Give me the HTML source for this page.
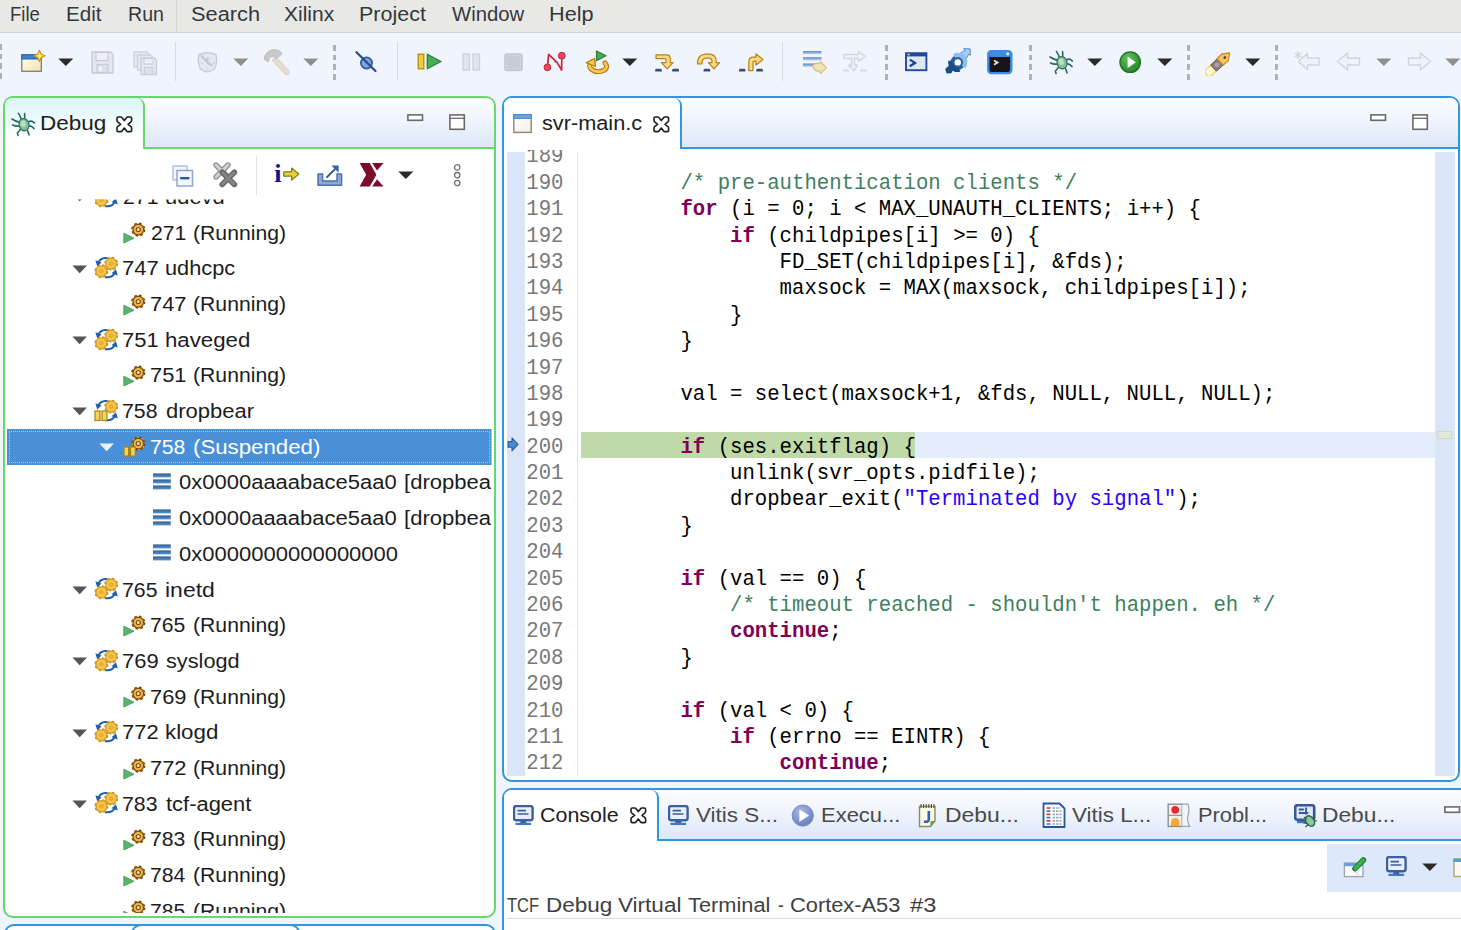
<!DOCTYPE html>
<html><head><meta charset="utf-8"><title>Vitis IDE</title>
<style>
html,body{margin:0;padding:0}
html{overflow:hidden;width:1461px;height:930px}
body{width:1461px;height:930px;position:relative;overflow:hidden;background:#f0f4fc;font-family:"Liberation Sans",sans-serif;font-size:19.6px}
div,span,svg{position:absolute;box-sizing:border-box}
.t{white-space:pre;line-height:24px;height:24px;transform-origin:0 0;display:block}
#menubar{left:0;top:0;width:1461px;height:33px;background:#e8e8e7;border-bottom:1px solid #d0d0d0}
#menusep{left:176px;top:0;width:1px;height:32px;background:#d4d4d4}
.panel{background:#fff;border:2px solid #3197db;border-radius:10px;overflow:hidden}
.hdr{left:0;top:0;right:0;height:51px;background:linear-gradient(#fdfdff 0%,#f3f6fd 35%,#dde8fa 100%);border-bottom:2px solid #3197db}
.tab{left:0;top:0;height:51px;background:#fff;border-right:2px solid #3197db;border-top-right-radius:8px}
#dbg{left:3px;top:96px;width:493px;height:822px;border-color:#69d76d}
#dbg .hdr{border-bottom-color:#69d76d}
#dbg .tab{width:140px;border-right-color:#69d76d;background:linear-gradient(#dcf6f6 0%,#eefbfb 45%,#fff 80%)}
#ed{left:502px;top:96px;width:958px;height:686px}
#ed .tab{width:178px}
#con{left:502px;top:788px;width:1000px;height:200px}
#con .tab{width:155px}
#bl{left:4px;top:924px;width:492px;height:60px}
#tree{left:5px;top:198px;width:486.5px;height:715px;overflow:hidden;clip-path:inset(1.5px 0 0 0)}
#tree .t{}
#sel{left:2px;top:232px;width:484.5px;height:35.5px;background:#4a90d9}
#sel:after{content:"";position:absolute;left:2px;top:2px;right:2px;bottom:2px;border:1px dotted #a5c9ee}
.ln,.cl{transform:scaleY(1.09);transform-origin:0 18.5px;font-family:"Liberation Mono",monospace;font-size:20.66px;line-height:26px;height:26px;white-space:pre;letter-spacing:-0.0020px}
.ln{left:526.3px;color:#787878}
.cl{left:581.3px;color:#000}
.cl b{color:#7f0055;font-weight:bold}
.cl i{font-style:normal}
.cl i.c{color:#3f7f5f}
.cl i.s{color:#2a00ff}
#ann{left:507px;top:152px;width:18px;height:624px;background:#dbe5f8}
#lnsep{left:577px;top:152px;width:1px;height:624px;background:#dfe7f7}
#ovr{left:1435px;top:152px;width:20px;height:624px;background:#dbe5f8}
#ovm{left:1437px;top:431px;width:15px;height:8px;background:#e2ead6;border:1px solid #cfdcbc}
#curline{left:581px;top:432px;width:854px;height:26px;background:#e4edfb}
#ipline{left:581px;top:432px;width:334px;height:26px;background:#c0d9a8}
#contb{left:1327px;top:844px;width:140px;height:48px;background:#dde8fa}
#conline{left:507px;top:918px;width:960px;height:1px;background:#dcdcdc}
.vsep{width:1px;background:#d7dbe6}
.dsep{width:3px;height:35px;top:45px;background:repeating-linear-gradient(#b0b0b0 0 5.6px,transparent 5.6px 9.7px)}
</style></head><body>
<div id="root" style="left:0;top:0;width:1461px;height:930px;overflow:hidden">
<div id="menubar"></div><div id="menusep"></div>
<span class="t" style="left:10.05px;top:2.21px;color:#34383a;transform:scaleX(0.9454);">File</span><span class="t" style="left:65.95px;top:2.21px;color:#34383a;transform:scaleX(1.0504);">Edit</span><span class="t" style="left:128.00px;top:2.21px;color:#34383a;transform:scaleX(0.9986);">Run</span><span class="t" style="left:191.00px;top:2.21px;color:#34383a;transform:scaleX(1.1114);">Search</span><span class="t" style="left:284.00px;top:2.21px;color:#34383a;transform:scaleX(1.0718);">Xilinx</span><span class="t" style="left:358.50px;top:2.21px;color:#34383a;transform:scaleX(1.0968);">Project</span><span class="t" style="left:452.00px;top:2.21px;color:#34383a;transform:scaleX(1.0349);">Window</span><span class="t" style="left:549.29px;top:2.21px;color:#34383a;transform:scaleX(1.1066);">Help</span>
<!-- toolbar -->
<div class="dsep" style="left:0px;width:2px;top:44px"></div>
<svg style="left:21px;top:49px" width="25" height="25" viewBox="0 0 25 25" >
<defs><linearGradient id="gnw" x1="0" y1="0" x2="1" y2="1"><stop offset="0" stop-color="#fff"/><stop offset="1" stop-color="#f3e3a4"/></linearGradient></defs>
<rect x="0.8" y="5.8" width="19.5" height="16.5" fill="url(#gnw)" stroke="#7d7d7d" stroke-width="1.3"/>
<rect x="0.8" y="5.8" width="19.5" height="4.2" fill="#3f7fd0" stroke="#2f62a8" stroke-width="1"/>
<path d="M18.5 1.2 L20.3 5.2 L24.2 6.8 L20.3 8.6 L18.5 12.6 L16.7 8.6 L12.8 6.8 L16.7 5.2Z" fill="#ffe56a" stroke="#c8961a" stroke-width="1.2" stroke-linejoin="round"/></svg>
<svg style="left:58px;top:58px" width="16" height="9" viewBox="0 0 16 9" ><path d="M0.3 0.5h15l-7.5 7.6z" fill="#2a2a2a"/></svg>
<svg style="left:91px;top:50.5px" width="24" height="24" viewBox="0 0 24 24" ><path d="M1 1h18.5l2.5 2.5v18.5h-21z" fill="#e3e6ee" stroke="#c6cad4" stroke-width="1.4" stroke-linejoin="round"/>
<rect x="5" y="1.5" width="12" height="8" fill="#eef0f6" stroke="#c6cad4" stroke-width="1.2"/>
<rect x="6" y="13.5" width="11" height="8" fill="#dcdfe8" stroke="#c6cad4" stroke-width="1.2"/><rect x="8" y="15.5" width="3" height="5" fill="#eef0f6"/></svg>
<svg style="left:133px;top:50.5px" width="25" height="25" viewBox="0 0 25 25" ><g opacity=".9"><path d="M1 1h13l2 2v13h-15z" fill="#e6e9f0" stroke="#c9cdd6" stroke-width="1.3"/>
<path d="M4.5 4h13l2 2v13h-15z" fill="#e6e9f0" stroke="#c9cdd6" stroke-width="1.3"/>
<path d="M8 7h13.5l2 2v14.5h-15.5z" fill="#e3e6ee" stroke="#c6cad4" stroke-width="1.3"/>
<rect x="11" y="7.5" width="9" height="5.5" fill="#eef0f6" stroke="#c6cad4"/><rect x="11.5" y="16.5" width="8.5" height="7" fill="#dcdfe8" stroke="#c6cad4"/></g></svg>
<div class="vsep" style="left:175px;top:42px;height:39px"></div>
<svg style="left:196px;top:51px" width="24" height="23" viewBox="0 0 24 23" ><path d="M3 3.5 Q11 0 20 3.5 Q22 12 18.5 18 Q11.5 23.5 4.5 18 Q1 12 3 3.5Z" fill="#e4e7ee" stroke="#c9cdd6" stroke-width="1.4"/>
<path d="M5 4.5l7 7.5M11.5 12V6.5M11.5 12l5 2.5" stroke="#c3c7d0" stroke-width="2.2" fill="none"/>
<path d="M5 12h1.5M17 12h1.5M11.5 17.5V19M7 7l1 1" stroke="#c9cdd6" stroke-width="1.3"/></svg>
<svg style="left:233px;top:58px" width="16" height="9" viewBox="0 0 16 9" ><path d="M0.3 0.5h15l-7.5 7.6z" fill="#8f8f8f"/></svg>
<svg style="left:263px;top:48px" width="29" height="28" viewBox="0 0 29 28" ><path d="M13 9 L26 23 Q27 26 24 26.5 Q22 27 21 25 L9 12Z" fill="#e6dccf" stroke="#d9d0c4" stroke-width="1"/>
<path d="M1.5 11.5 Q1 6 6 3 Q11 0.5 16 2.5 L19 5.5 L13.5 11 L10.5 8.5 Q8 8 6.5 10 L5 14Z" fill="#c9c9c9" stroke="#bdbdbd" stroke-width="1"/></svg>
<svg style="left:303px;top:58px" width="16" height="9" viewBox="0 0 16 9" ><path d="M0.3 0.5h15l-7.5 7.6z" fill="#8f8f8f"/></svg>
<div class="dsep" style="left:333px"></div>
<svg style="left:354px;top:50px" width="24" height="23" viewBox="0 0 24 23" ><circle cx="12.5" cy="13" r="5.6" fill="#7fa6dd" stroke="#2d5ea6" stroke-width="1.8"/>
<path d="M2.5 2.2 L21.5 21" stroke="#27498f" stroke-width="2.2" stroke-linecap="round"/></svg>
<div class="vsep" style="left:397px;top:42px;height:39px"></div>
<svg style="left:417px;top:52px" width="26" height="19" viewBox="0 0 26 19" ><rect x="1.2" y="2.2" width="5.6" height="14.6" fill="#f3cc3c" stroke="#b58d12" stroke-width="1.3"/>
<path d="M10.3 2.2 L24 9.5 L10.3 16.8Z" fill="#48ad55" stroke="#2b7f3a" stroke-width="1.3" stroke-linejoin="round"/></svg>
<svg style="left:462px;top:53px" width="20" height="19" viewBox="0 0 20 19" ><rect x="1" y="1" width="6.5" height="16" fill="#e1e4eb" stroke="#cdd1da" stroke-width="1.3"/><rect x="11" y="1" width="6.5" height="16" fill="#e1e4eb" stroke="#cdd1da" stroke-width="1.3"/></svg>
<svg style="left:504px;top:53px" width="20" height="19" viewBox="0 0 20 19" ><rect x="1" y="1" width="17" height="16.5" rx="2" fill="#cfd2d9" stroke="#c3c7d0" stroke-width="1.6"/><rect x="3.2" y="3.2" width="12.6" height="12" fill="#c9ccd4"/></svg>
<svg style="left:542px;top:50px" width="26" height="23" viewBox="0 0 26 23" ><path d="M5.6 15.5 L6.6 4.4 L13.2 10.6 L15.2 12.6 L19.6 20 L19.8 7.5" fill="none" stroke="#c8243c" stroke-width="1.7" stroke-linejoin="round" stroke-linecap="round"/>
<path d="M12.6 11.6l3 .6" stroke="#5a6c9a" stroke-width="1.6"/>
<circle cx="5.4" cy="17.3" r="3.4" fill="#e8485c" stroke="#c8243c" stroke-width="1"/><circle cx="19.8" cy="5.7" r="3.4" fill="#e8485c" stroke="#c8243c" stroke-width="1"/></svg>
<svg style="left:584px;top:49px" width="27" height="26" viewBox="0 0 27 26" ><path d="M12.5 2 L22 6.8 L12.5 11.6Z" fill="#43aa52" stroke="#2b7f3a" stroke-width="1.2" stroke-linejoin="round"/>
<path d="M9 12.5 Q3.5 16 7 20 Q13 25 20.5 21 Q24.5 18 21 14" fill="none" stroke="#b57c12" stroke-width="5" stroke-linecap="round"/>
<path d="M9 12.5 Q3.5 16 7 20 Q13 25 20.5 21 Q24.5 18 21 14" fill="none" stroke="#f7c84a" stroke-width="2.8" stroke-linecap="round"/>
<path d="M2.2 13.8 L10.5 9.5 L11.5 17.5Z" fill="#f7c84a" stroke="#b57c12" stroke-width="1.2" stroke-linejoin="round"/></svg>
<svg style="left:622.4px;top:58px" width="16" height="9" viewBox="0 0 16 9" ><path d="M0.3 0.5h15l-7.5 7.6z" fill="#2a2a2a"/></svg>
<svg style="left:654px;top:52px" width="26" height="20" viewBox="0 0 26 20" ><path d="M2 2.8 H12.5 Q16.2 2.8 16.2 6.5 V10.6 H19 L13.2 16.9 L7.4 10.6 H12 V7.6 Q12 6.6 11 6.6 H2Z" fill="#fbdb80" stroke="#b8821e" stroke-width="1.25" stroke-linejoin="round"/>
<path d="M1.2 19.4 v-1.2 q0 -1.4 1.4 -1.4 h3.8 q1.4 0 1.4 1.4 v1.2z" fill="#3c4d74"/><path d="M18.2 19.4 v-1.2 q0 -1.4 1.4 -1.4 h4.0 q1.4 0 1.4 1.4 v1.2z" fill="#3c4d74"/></svg>
<svg style="left:696px;top:52px" width="26" height="20" viewBox="0 0 26 20" ><path d="M1.6 11.8 Q1.2 2.2 10.5 2.2 H13 Q20.2 2.2 20.2 9.8 V10.6 H23.6 L18 16.9 L12.4 10.6 H16 V9.6 Q16 6.2 12.8 6.2 H10.5 Q5.6 6.2 5.8 11.8Z" fill="#fbdb80" stroke="#b8821e" stroke-width="1.25" stroke-linejoin="round"/>
<path d="M7.6 19.4 v-1.2 q0 -1.4 1.4 -1.4 h3.8 q1.4 0 1.4 1.4 v1.2z" fill="#3c4d74"/></svg>
<svg style="left:738px;top:52px" width="26" height="20" viewBox="0 0 26 20" ><path d="M10.8 18.6 V9.5 Q10.8 5 15.3 5 H18 V1.9 L25 7.4 L18 12.9 V9.2 H16.2 Q15 9.2 15 10.4 V18.6Z" fill="#fbdb80" stroke="#b8821e" stroke-width="1.25" stroke-linejoin="round"/>
<path d="M1 19.4 v-1.2 q0 -1.4 1.4 -1.4 h3.6000000000000005 q1.4 0 1.4 1.4 v1.2z" fill="#3c4d74"/><path d="M18.3 19.4 v-1.2 q0 -1.4 1.4 -1.4 h3.8 q1.4 0 1.4 1.4 v1.2z" fill="#3c4d74"/></svg>
<div class="vsep" style="left:782px;top:42px;height:39px"></div>
<svg style="left:801px;top:50px" width="27" height="26" viewBox="0 0 27 26" ><defs><linearGradient id="gfl" x1="0" y1="0" x2="0" y2="1"><stop offset="0" stop-color="#5a88c8"/><stop offset="1" stop-color="#bdd3f1"/></linearGradient></defs>
<rect x="2" y="1" width="18.5" height="3.2" fill="url(#gfl)"/><rect x="2" y="7.2" width="18.5" height="3.2" fill="url(#gfl)"/><rect x="2" y="13.5" width="18.5" height="3.4" fill="url(#gfl)"/>
<path d="M11.6 16 Q14 12.4 18.6 13.6 L19.4 11.8 L25.4 17.6 L19.6 23.6 L18.6 21 Q14 22 11.6 16Z" fill="#f3e3bb" stroke="#dcbc7a" stroke-width="1.2" stroke-linejoin="round"/></svg>
<svg style="left:842px;top:50px" width="28" height="24" viewBox="0 0 28 24" ><path d="M2 4.5h14.5V1.5l7 5-7 5V8.5h-4v6.5h3L12 21 6.5 15h3V8.5H2Z" fill="#eef0f6" stroke="#d2d6de" stroke-width="1.3" stroke-linejoin="round"/>
<rect x="1" y="19.5" width="6" height="2" fill="#d5d9e2"/><rect x="18" y="19.5" width="7" height="2" fill="#d5d9e2"/></svg>
<div class="dsep" style="left:884.5px"></div>
<svg style="left:905px;top:52px" width="23" height="20" viewBox="0 0 23 20" ><rect x="1" y="1.2" width="20.4" height="17" fill="#dde8f4" stroke="#27479a" stroke-width="1.9"/>
<rect x="1" y="1.2" width="20.4" height="3.2" fill="#27479a"/><rect x="2.6" y="1.8" width="2" height="1.5" fill="#cfe0ff"/>
<path d="M4.8 7.6 L10 10.9 L4.8 14.2" fill="none" stroke="#1f3f94" stroke-width="2.3"/></svg>
<svg style="left:944px;top:47px" width="28" height="28" viewBox="0 0 28 28" ><path d="M15 7 L21 3.2 L19.6 1.6 L26.2 1.8 L26.4 8.4 L24.8 7 L22 12 Z" fill="#a6cbf0" stroke="#5a8fd0" stroke-width="1"/>
<path d="M6 17.5 L10 21.6 L7.4 26.2 L2.6 26.6 L1.2 22 Z" fill="#1d4c8a"/>
<circle cx="13.8" cy="15.4" r="5.3" fill="#fff" stroke="#2a5ea6" stroke-width="4.2"/>
<path d="M10 8.9 A7.4 7.4 0 0 1 21.2 15.4 A7.4 7.4 0 0 1 19.6 20" fill="none" stroke="#8fbdec" stroke-width="4.2"/>
<path d="M6.5 14 A7.4 7.4 0 0 0 15.6 22.6" fill="none" stroke="#1d4c8a" stroke-width="4.4"/></svg>
<svg style="left:987px;top:50px" width="26" height="25" viewBox="0 0 26 25" ><rect x="1.3" y="1.3" width="23" height="21.8" rx="3" fill="#17171b" stroke="#3d8be6" stroke-width="2.4"/>
<rect x="2" y="2" width="21.6" height="5" rx="2" fill="#3d8be6"/><rect x="19.4" y="2.6" width="2.6" height="2.6" fill="#e8f2ff"/>
<path d="M7 10.5 L10.5 12.6 L7 14.8" fill="none" stroke="#f4e8c8" stroke-width="1.8"/><rect x="4" y="8" width="18" height="12" fill="none"/></svg>
<div class="dsep" style="left:1028.5px"></div>
<svg style="left:1049px;top:50px" width="24" height="25" viewBox="0 0 24 25" ><g stroke="#2c6464" stroke-width="1.6" stroke-linecap="round" fill="none">
<path d="M10.6 8 Q9.6 4.5 7.4 1.4M13.6 7.4 Q13.8 4 13.6 1.6M9 10.4 Q5 9.6 1 7M17 10 Q20 8.4 21.6 9.6 L23.4 11M8.2 14 Q4.6 14.6 1.6 13 M17.8 13.6 Q21 14 23 16.6M9.4 17.4 Q7.6 20 6.4 21 L7 23.4M15.8 17.8 Q17.6 20 18 23"/></g>
<ellipse cx="13" cy="12.7" rx="5" ry="6.1" fill="#86c096" stroke="#34766a" stroke-width="1.3" transform="rotate(-12 13 12.7)"/>
<ellipse cx="12.4" cy="11.6" rx="2.6" ry="3.4" fill="#c4e4c6" opacity=".85" transform="rotate(-12 13 12.7)"/></svg>
<svg style="left:1087px;top:58px" width="16" height="9" viewBox="0 0 16 9" ><path d="M0.3 0.5h15l-7.5 7.6z" fill="#2a2a2a"/></svg>
<svg style="left:1118px;top:49.5px" width="25" height="25" viewBox="0 0 25 25" ><defs><radialGradient id="grn" cx=".4" cy=".3" r=".8"><stop offset="0" stop-color="#5cc458"/><stop offset="1" stop-color="#1f7c25"/></radialGradient></defs>
<circle cx="12.2" cy="12.2" r="10.3" fill="url(#grn)" stroke="#1d6f24" stroke-width="1.2"/>
<path d="M9.6 6.4 L17.8 12.2 L9.6 18Z" fill="#fff"/></svg>
<svg style="left:1157px;top:58px" width="16" height="9" viewBox="0 0 16 9" ><path d="M0.3 0.5h15l-7.5 7.6z" fill="#2a2a2a"/></svg>
<div class="dsep" style="left:1186.5px"></div>
<svg style="left:1205px;top:49px" width="28" height="27" viewBox="0 0 28 27" ><g transform="rotate(-43 14 14)">
<rect x="-3" y="10" width="10" height="8" rx="2.4" fill="#fffbd8" stroke="#f3dc62" stroke-width="1.6"/>
<rect x="6.6" y="9.8" width="9" height="8.4" fill="#8f7f74" stroke="#6e5f55" stroke-width="1"/><circle cx="11.2" cy="14" r="2.3" fill="#a6a3b4"/>
<path d="M15.6 9.4 H22.4 L28.6 14 L22.4 18.6 H15.6Z" fill="#f7c664" stroke="#c98a1e" stroke-width="1.2"/><circle cx="22" cy="14" r="1.4" fill="#5c4420"/></g></svg>
<svg style="left:1245px;top:58px" width="16" height="9" viewBox="0 0 16 9" ><path d="M0.3 0.5h15l-7.5 7.6z" fill="#2a2a2a"/></svg>
<div class="dsep" style="left:1275px"></div>
<svg style="left:1293px;top:50px" width="28" height="22" viewBox="0 0 28 22" ><path d="M26 8 H14.5 V3.5 L5.5 11.5 L14.5 19.5 V15 H26Z" fill="#f0f2f8" stroke="#d0d4dd" stroke-width="1.4" stroke-linejoin="round"/>
<path d="M5 1v8M1.5 3l7 4M8.5 3l-7 4" stroke="#cfd3dc" stroke-width="1.4"/></svg>
<svg style="left:1336px;top:50px" width="25" height="22" viewBox="0 0 25 22" ><path d="M23.5 8 H11.5 V3 L1.5 11.5 L11.5 20 V15 H23.5Z" fill="#f0f2f8" stroke="#d0d4dd" stroke-width="1.4" stroke-linejoin="round"/></svg>
<svg style="left:1376px;top:58px" width="16" height="9" viewBox="0 0 16 9" ><path d="M0.3 0.5h15l-7.5 7.6z" fill="#8f8f8f"/></svg>
<svg style="left:1407px;top:50px" width="25" height="22" viewBox="0 0 25 22" ><path d="M1.5 8 H13.5 V3 L23.5 11.5 L13.5 20 V15 H1.5Z" fill="#f0f2f8" stroke="#d0d4dd" stroke-width="1.4" stroke-linejoin="round"/></svg>
<svg style="left:1445.4px;top:58px" width="16" height="9" viewBox="0 0 16 9" ><path d="M0.3 0.5h15l-7.5 7.6z" fill="#8f8f8f"/></svg>
<!-- Debug view -->
<div id="dbg" class="panel"><div class="hdr"></div><div class="tab"></div></div>
<span class="t" style="left:40.45px;top:110.81px;color:#202020;transform:scaleX(1.1479);">Debug</span>
<svg style="left:11px;top:112px" width="25" height="25" viewBox="0 0 25 25" ><g stroke="#2c6464" stroke-width="1.6" stroke-linecap="round" fill="none">
<path d="M10.6 8 Q9.6 4.5 7.4 1.4M13.6 7.4 Q13.8 4 13.6 1.6M9 10.4 Q5 9.6 1 7M17 10 Q20 8.4 21.6 9.6 L23.4 11M8.2 14 Q4.6 14.6 1.6 13 M17.8 13.6 Q21 14 23 16.6M9.4 17.4 Q7.6 20 6.4 21 L7 23.4M15.8 17.8 Q17.6 20 18 23"/></g>
<ellipse cx="13" cy="12.7" rx="5" ry="6.1" fill="#86c096" stroke="#34766a" stroke-width="1.3" transform="rotate(-12 13 12.7)"/>
<ellipse cx="12.4" cy="11.6" rx="2.6" ry="3.4" fill="#c4e4c6" opacity=".85" transform="rotate(-12 13 12.7)"/></svg>
<svg style="left:116.3px;top:115.7px" width="17" height="17" viewBox="0 0 17 17" ><path d="M1 2.2 Q1 1 2.2 1 H4.6 Q5.6 1 6.2 1.9 L8.3 4.6 L10.4 1.9 Q11 1 12 1 H14.4 Q15.6 1 15.6 2.2 V4.6 Q15.6 5.6 14.7 6.2 L12 8.3 L14.7 10.4 Q15.6 11 15.6 12 V14.4 Q15.6 15.6 14.4 15.6 H12 Q11 15.6 10.4 14.7 L8.3 12 L6.2 14.7 Q5.6 15.6 4.6 15.6 H2.2 Q1 15.6 1 14.4 V12 Q1 11 1.9 10.4 L4.6 8.3 L1.9 6.2 Q1 5.6 1 4.6Z" fill="#fff" stroke="#1d1d1d" stroke-width="1.6" stroke-linejoin="round"/></svg>
<svg style="left:406.6px;top:113.6px" width="17" height="8" viewBox="0 0 17 8" ><rect x="0.9" y="0.9" width="14.6" height="5.4" fill="#fff" stroke="#6a6a6a" stroke-width="1.6"/></svg>
<svg style="left:448.6px;top:114px" width="17" height="17" viewBox="0 0 17 17" ><rect x="0.9" y="0.9" width="14.4" height="14.4" fill="#fff" stroke="#6a6a6a" stroke-width="1.6"/><path d="M0.9 4.3h14.4" stroke="#6a6a6a" stroke-width="1.3"/></svg>
<svg style="left:172px;top:164.5px" width="23" height="23" viewBox="0 0 23 23" ><rect x="1" y="1" width="14" height="14" fill="#f2f6fd" stroke="#a9bddc" stroke-width="1.4"/>
<rect x="5" y="5.5" width="15.5" height="15.5" fill="#f2f6fd" stroke="#8fa8d2" stroke-width="1.5"/>
<rect x="8.2" y="12" width="9.2" height="2.4" fill="#2b5aa5"/></svg>
<svg style="left:212px;top:161px" width="27" height="27" viewBox="0 0 27 27" ><g stroke-linecap="round"><path d="M4 4 L16 16M16 4 L4 16" stroke="#8e8e8e" stroke-width="5.4"/><path d="M4 4 L16 16M16 4 L4 16" stroke="#d2d2d2" stroke-width="3"/>
<path d="M10.2 11.2 L22.4 23.4M22.4 11.2 L10.2 23.4" stroke="#6a6a6a" stroke-width="5.6"/>
<path d="M10.6 11.6 L22 23M22 11.6 L10.6 23" stroke="#858585" stroke-width="2.6"/></g></svg>
<div class="vsep" style="left:256px;top:156px;height:39px;background:#e3e3e3"></div>
<svg style="left:274px;top:162px" width="27" height="22" viewBox="0 0 27 22" ><text x="0.2" y="19.6" font-family="Liberation Serif" font-weight="bold" font-size="26" fill="#13138f">i</text>
<path d="M9.8 9.8 H17.6 V6 L24.8 12 L17.6 18 V14.2 H9.8Z" fill="#e8d23c" stroke="#857814" stroke-width="1.2" stroke-linejoin="round"/></svg>
<svg style="left:316px;top:163px" width="28" height="25" viewBox="0 0 28 25" ><path d="M2 11 H6.6 V18 H21 V11 H25.6 V22.2 H2Z" fill="#8ea9d6" stroke="#4f6fae" stroke-width="1.5" stroke-linejoin="round"/>
<path d="M10.5 14.7 L21 4.2" stroke="#2b4f93" stroke-width="1.9"/><path d="M15.5 2.6 H22.6 V9.8Z" fill="#2b66ad"/></svg>
<svg style="left:358px;top:161px" width="28" height="28" viewBox="0 0 28 28" ><path d="M1.6 2 H11.8 L18.4 13.7 L11.8 25.6 H1.6 L8.2 13.7Z" fill="#7a0c2c"/>
<path d="M14.2 2 H25.6 L19 9.4Z" fill="#7a0c2c"/><path d="M19 18.2 L25.6 25.6 H14.2Z" fill="#7a0c2c"/></svg>
<svg style="left:398px;top:171.4px" width="16" height="9" viewBox="0 0 16 9" ><path d="M0.3 0.5h15l-7.5 7.6z" fill="#2a2a2a"/></svg>
<svg style="left:452px;top:163px" width="11" height="25" viewBox="0 0 11 25" ><g fill="#fff" stroke="#707070" stroke-width="1.3"><circle cx="5.2" cy="4.4" r="2.7"/><circle cx="5.2" cy="12.2" r="2.7"/><circle cx="5.2" cy="20" r="2.7"/></g></svg>
<div id="tree"><div id="sel" style="top:231.1px"></div>
<svg style="left:66.6px;top:-4.680000000000007px" width="16" height="9" viewBox="0 0 16 9" ><path d="M0.4 0.6h14.6l-7.3 7.6z" fill="#555"/></svg>
<svg style="left:89px;top:-13.180000000000007px" width="25" height="23" viewBox="0 0 25 23" ><path d="M13.6 2.2 Q6.2 1.2 4 7.4" fill="none" stroke="#1f5fa8" stroke-width="2"/><path d="M1.4 4.2 L7.6 6.4 L3.2 10.4Z" fill="#1f5fa8"/>
<path d="M11 21.2 Q18.6 22.2 21 16.4" fill="none" stroke="#1f5fa8" stroke-width="2"/><path d="M23.8 19.4 L17.6 17.2 L22 13.2Z" fill="#1f5fa8"/><g transform="translate(17.2 7.6)"><g><circle cx="0" cy="0" r="6.3" fill="#f6c648" stroke="#c58c24" stroke-width="1.3" stroke-dasharray="2.6 2.35"/>
<circle cx="0" cy="0" r="5.3" fill="#f6c648" stroke="#cf982c" stroke-width="1"/><circle cx="0" cy="0" r="1.8" fill="#f2b43a" stroke="#d9a02e" stroke-width="0.9"/></g></g><g transform="translate(7.4 15.2)"><g><circle cx="0" cy="0" r="6.3" fill="#f6c648" stroke="#c58c24" stroke-width="1.3" stroke-dasharray="2.6 2.35"/>
<circle cx="0" cy="0" r="5.3" fill="#f6c648" stroke="#cf982c" stroke-width="1"/><circle cx="0" cy="0" r="1.8" fill="#f2b43a" stroke="#d9a02e" stroke-width="0.9"/></g></g></svg>
<svg style="left:117.5px;top:24.4px" width="24" height="22" viewBox="0 0 24 22" ><path d="M0.8 11.2 L11 16.2 L0.8 21Z" fill="#5ab56c" stroke="#3f9554" stroke-width="0.8"/><g transform="translate(15.3 7.6)"><g><circle cx="0" cy="0" r="6.4" fill="#f0bd48" stroke="#74481a" stroke-width="1.3" stroke-dasharray="2.6 2.43"/>
<circle cx="0" cy="0" r="5.2" fill="#f0bd48" stroke="#74481a" stroke-width="1.1"/><circle cx="0" cy="0" r="2.1" fill="#fbe6a4" stroke="#74481a" stroke-width="1.2"/></g></g></svg>
<svg style="left:66.6px;top:66.68px" width="16" height="9" viewBox="0 0 16 9" ><path d="M0.4 0.6h14.6l-7.3 7.6z" fill="#555"/></svg>
<svg style="left:89px;top:58.18000000000001px" width="25" height="23" viewBox="0 0 25 23" ><path d="M13.6 2.2 Q6.2 1.2 4 7.4" fill="none" stroke="#1f5fa8" stroke-width="2"/><path d="M1.4 4.2 L7.6 6.4 L3.2 10.4Z" fill="#1f5fa8"/>
<path d="M11 21.2 Q18.6 22.2 21 16.4" fill="none" stroke="#1f5fa8" stroke-width="2"/><path d="M23.8 19.4 L17.6 17.2 L22 13.2Z" fill="#1f5fa8"/><g transform="translate(17.2 7.6)"><g><circle cx="0" cy="0" r="6.3" fill="#f6c648" stroke="#c58c24" stroke-width="1.3" stroke-dasharray="2.6 2.35"/>
<circle cx="0" cy="0" r="5.3" fill="#f6c648" stroke="#cf982c" stroke-width="1"/><circle cx="0" cy="0" r="1.8" fill="#f2b43a" stroke="#d9a02e" stroke-width="0.9"/></g></g><g transform="translate(7.4 15.2)"><g><circle cx="0" cy="0" r="6.3" fill="#f6c648" stroke="#c58c24" stroke-width="1.3" stroke-dasharray="2.6 2.35"/>
<circle cx="0" cy="0" r="5.3" fill="#f6c648" stroke="#cf982c" stroke-width="1"/><circle cx="0" cy="0" r="1.8" fill="#f2b43a" stroke="#d9a02e" stroke-width="0.9"/></g></g></svg>
<svg style="left:117.5px;top:95.76000000000002px" width="24" height="22" viewBox="0 0 24 22" ><path d="M0.8 11.2 L11 16.2 L0.8 21Z" fill="#5ab56c" stroke="#3f9554" stroke-width="0.8"/><g transform="translate(15.3 7.6)"><g><circle cx="0" cy="0" r="6.4" fill="#f0bd48" stroke="#74481a" stroke-width="1.3" stroke-dasharray="2.6 2.43"/>
<circle cx="0" cy="0" r="5.2" fill="#f0bd48" stroke="#74481a" stroke-width="1.1"/><circle cx="0" cy="0" r="2.1" fill="#fbe6a4" stroke="#74481a" stroke-width="1.2"/></g></g></svg>
<svg style="left:66.6px;top:138.03999999999996px" width="16" height="9" viewBox="0 0 16 9" ><path d="M0.4 0.6h14.6l-7.3 7.6z" fill="#555"/></svg>
<svg style="left:89px;top:129.53999999999996px" width="25" height="23" viewBox="0 0 25 23" ><path d="M13.6 2.2 Q6.2 1.2 4 7.4" fill="none" stroke="#1f5fa8" stroke-width="2"/><path d="M1.4 4.2 L7.6 6.4 L3.2 10.4Z" fill="#1f5fa8"/>
<path d="M11 21.2 Q18.6 22.2 21 16.4" fill="none" stroke="#1f5fa8" stroke-width="2"/><path d="M23.8 19.4 L17.6 17.2 L22 13.2Z" fill="#1f5fa8"/><g transform="translate(17.2 7.6)"><g><circle cx="0" cy="0" r="6.3" fill="#f6c648" stroke="#c58c24" stroke-width="1.3" stroke-dasharray="2.6 2.35"/>
<circle cx="0" cy="0" r="5.3" fill="#f6c648" stroke="#cf982c" stroke-width="1"/><circle cx="0" cy="0" r="1.8" fill="#f2b43a" stroke="#d9a02e" stroke-width="0.9"/></g></g><g transform="translate(7.4 15.2)"><g><circle cx="0" cy="0" r="6.3" fill="#f6c648" stroke="#c58c24" stroke-width="1.3" stroke-dasharray="2.6 2.35"/>
<circle cx="0" cy="0" r="5.3" fill="#f6c648" stroke="#cf982c" stroke-width="1"/><circle cx="0" cy="0" r="1.8" fill="#f2b43a" stroke="#d9a02e" stroke-width="0.9"/></g></g></svg>
<svg style="left:117.5px;top:167.12000000000003px" width="24" height="22" viewBox="0 0 24 22" ><path d="M0.8 11.2 L11 16.2 L0.8 21Z" fill="#5ab56c" stroke="#3f9554" stroke-width="0.8"/><g transform="translate(15.3 7.6)"><g><circle cx="0" cy="0" r="6.4" fill="#f0bd48" stroke="#74481a" stroke-width="1.3" stroke-dasharray="2.6 2.43"/>
<circle cx="0" cy="0" r="5.2" fill="#f0bd48" stroke="#74481a" stroke-width="1.1"/><circle cx="0" cy="0" r="2.1" fill="#fbe6a4" stroke="#74481a" stroke-width="1.2"/></g></g></svg>
<svg style="left:66.6px;top:209.39999999999998px" width="16" height="9" viewBox="0 0 16 9" ><path d="M0.4 0.6h14.6l-7.3 7.6z" fill="#555"/></svg>
<svg style="left:89px;top:200.89999999999998px" width="25" height="23" viewBox="0 0 25 23" ><path d="M13.6 2.2 Q6.2 1.2 4 7.4" fill="none" stroke="#1f5fa8" stroke-width="2"/><path d="M1.4 4.2 L7.6 6.4 L3.2 10.4Z" fill="#1f5fa8"/>
<path d="M11 21.2 Q18.6 22.2 21 16.4" fill="none" stroke="#1f5fa8" stroke-width="2"/><path d="M23.8 19.4 L17.6 17.2 L22 13.2Z" fill="#1f5fa8"/><g transform="translate(17.2 7.6)"><g><circle cx="0" cy="0" r="6.3" fill="#f6c648" stroke="#c58c24" stroke-width="1.3" stroke-dasharray="2.6 2.35"/>
<circle cx="0" cy="0" r="5.3" fill="#f6c648" stroke="#cf982c" stroke-width="1"/><circle cx="0" cy="0" r="1.8" fill="#f2b43a" stroke="#d9a02e" stroke-width="0.9"/></g></g>
<rect x="1" y="12" width="5" height="9.5" fill="#f6d456" stroke="#a88414" stroke-width="1.2"/><rect x="8" y="12" width="5" height="9.5" fill="#f6d456" stroke="#a88414" stroke-width="1.2"/></svg>
<svg style="left:94.4px;top:245.48px" width="16" height="9" viewBox="0 0 16 9" ><path d="M0.4 0.6h14.6l-7.3 7.6z" fill="#e9f1fb"/></svg>
<svg style="left:117.5px;top:238.48px" width="24" height="22" viewBox="0 0 24 22" ><g transform="translate(15.3 7.6)"><g><circle cx="0" cy="0" r="6.4" fill="#f0bd48" stroke="#74481a" stroke-width="1.3" stroke-dasharray="2.6 2.43"/>
<circle cx="0" cy="0" r="5.2" fill="#f0bd48" stroke="#74481a" stroke-width="1.1"/><circle cx="0" cy="0" r="2.1" fill="#fbe6a4" stroke="#74481a" stroke-width="1.2"/></g></g><rect x="1" y="11" width="4.6" height="9" fill="#f6d456" stroke="#a88414" stroke-width="1.2"/><rect x="7.6" y="11" width="4.6" height="9" fill="#f6d456" stroke="#a88414" stroke-width="1.2"/></svg>
<svg style="left:148.2px;top:274.96px" width="19" height="18" viewBox="0 0 19 18" ><defs><linearGradient id="gfr" x1="0" y1="0" x2="0" y2="1"><stop offset="0" stop-color="#2f5f95"/><stop offset="1" stop-color="#5b93cf"/></linearGradient></defs>
<rect x="0" y="0.4" width="17.8" height="4" fill="url(#gfr)"/><rect x="0" y="6.4" width="17.8" height="4" fill="url(#gfr)"/><rect x="0" y="12.4" width="17.8" height="4" fill="url(#gfr)"/></svg>
<svg style="left:148.2px;top:310.64000000000004px" width="19" height="18" viewBox="0 0 19 18" ><defs><linearGradient id="gfr" x1="0" y1="0" x2="0" y2="1"><stop offset="0" stop-color="#2f5f95"/><stop offset="1" stop-color="#5b93cf"/></linearGradient></defs>
<rect x="0" y="0.4" width="17.8" height="4" fill="url(#gfr)"/><rect x="0" y="6.4" width="17.8" height="4" fill="url(#gfr)"/><rect x="0" y="12.4" width="17.8" height="4" fill="url(#gfr)"/></svg>
<svg style="left:148.2px;top:346.32px" width="19" height="18" viewBox="0 0 19 18" ><defs><linearGradient id="gfr" x1="0" y1="0" x2="0" y2="1"><stop offset="0" stop-color="#2f5f95"/><stop offset="1" stop-color="#5b93cf"/></linearGradient></defs>
<rect x="0" y="0.4" width="17.8" height="4" fill="url(#gfr)"/><rect x="0" y="6.4" width="17.8" height="4" fill="url(#gfr)"/><rect x="0" y="12.4" width="17.8" height="4" fill="url(#gfr)"/></svg>
<svg style="left:66.6px;top:387.79999999999995px" width="16" height="9" viewBox="0 0 16 9" ><path d="M0.4 0.6h14.6l-7.3 7.6z" fill="#555"/></svg>
<svg style="left:89px;top:379.29999999999995px" width="25" height="23" viewBox="0 0 25 23" ><path d="M13.6 2.2 Q6.2 1.2 4 7.4" fill="none" stroke="#1f5fa8" stroke-width="2"/><path d="M1.4 4.2 L7.6 6.4 L3.2 10.4Z" fill="#1f5fa8"/>
<path d="M11 21.2 Q18.6 22.2 21 16.4" fill="none" stroke="#1f5fa8" stroke-width="2"/><path d="M23.8 19.4 L17.6 17.2 L22 13.2Z" fill="#1f5fa8"/><g transform="translate(17.2 7.6)"><g><circle cx="0" cy="0" r="6.3" fill="#f6c648" stroke="#c58c24" stroke-width="1.3" stroke-dasharray="2.6 2.35"/>
<circle cx="0" cy="0" r="5.3" fill="#f6c648" stroke="#cf982c" stroke-width="1"/><circle cx="0" cy="0" r="1.8" fill="#f2b43a" stroke="#d9a02e" stroke-width="0.9"/></g></g><g transform="translate(7.4 15.2)"><g><circle cx="0" cy="0" r="6.3" fill="#f6c648" stroke="#c58c24" stroke-width="1.3" stroke-dasharray="2.6 2.35"/>
<circle cx="0" cy="0" r="5.3" fill="#f6c648" stroke="#cf982c" stroke-width="1"/><circle cx="0" cy="0" r="1.8" fill="#f2b43a" stroke="#d9a02e" stroke-width="0.9"/></g></g></svg>
<svg style="left:117.5px;top:416.88px" width="24" height="22" viewBox="0 0 24 22" ><path d="M0.8 11.2 L11 16.2 L0.8 21Z" fill="#5ab56c" stroke="#3f9554" stroke-width="0.8"/><g transform="translate(15.3 7.6)"><g><circle cx="0" cy="0" r="6.4" fill="#f0bd48" stroke="#74481a" stroke-width="1.3" stroke-dasharray="2.6 2.43"/>
<circle cx="0" cy="0" r="5.2" fill="#f0bd48" stroke="#74481a" stroke-width="1.1"/><circle cx="0" cy="0" r="2.1" fill="#fbe6a4" stroke="#74481a" stroke-width="1.2"/></g></g></svg>
<svg style="left:66.6px;top:459.15999999999997px" width="16" height="9" viewBox="0 0 16 9" ><path d="M0.4 0.6h14.6l-7.3 7.6z" fill="#555"/></svg>
<svg style="left:89px;top:450.65999999999997px" width="25" height="23" viewBox="0 0 25 23" ><path d="M13.6 2.2 Q6.2 1.2 4 7.4" fill="none" stroke="#1f5fa8" stroke-width="2"/><path d="M1.4 4.2 L7.6 6.4 L3.2 10.4Z" fill="#1f5fa8"/>
<path d="M11 21.2 Q18.6 22.2 21 16.4" fill="none" stroke="#1f5fa8" stroke-width="2"/><path d="M23.8 19.4 L17.6 17.2 L22 13.2Z" fill="#1f5fa8"/><g transform="translate(17.2 7.6)"><g><circle cx="0" cy="0" r="6.3" fill="#f6c648" stroke="#c58c24" stroke-width="1.3" stroke-dasharray="2.6 2.35"/>
<circle cx="0" cy="0" r="5.3" fill="#f6c648" stroke="#cf982c" stroke-width="1"/><circle cx="0" cy="0" r="1.8" fill="#f2b43a" stroke="#d9a02e" stroke-width="0.9"/></g></g><g transform="translate(7.4 15.2)"><g><circle cx="0" cy="0" r="6.3" fill="#f6c648" stroke="#c58c24" stroke-width="1.3" stroke-dasharray="2.6 2.35"/>
<circle cx="0" cy="0" r="5.3" fill="#f6c648" stroke="#cf982c" stroke-width="1"/><circle cx="0" cy="0" r="1.8" fill="#f2b43a" stroke="#d9a02e" stroke-width="0.9"/></g></g></svg>
<svg style="left:117.5px;top:488.2399999999999px" width="24" height="22" viewBox="0 0 24 22" ><path d="M0.8 11.2 L11 16.2 L0.8 21Z" fill="#5ab56c" stroke="#3f9554" stroke-width="0.8"/><g transform="translate(15.3 7.6)"><g><circle cx="0" cy="0" r="6.4" fill="#f0bd48" stroke="#74481a" stroke-width="1.3" stroke-dasharray="2.6 2.43"/>
<circle cx="0" cy="0" r="5.2" fill="#f0bd48" stroke="#74481a" stroke-width="1.1"/><circle cx="0" cy="0" r="2.1" fill="#fbe6a4" stroke="#74481a" stroke-width="1.2"/></g></g></svg>
<svg style="left:66.6px;top:530.52px" width="16" height="9" viewBox="0 0 16 9" ><path d="M0.4 0.6h14.6l-7.3 7.6z" fill="#555"/></svg>
<svg style="left:89px;top:522.02px" width="25" height="23" viewBox="0 0 25 23" ><path d="M13.6 2.2 Q6.2 1.2 4 7.4" fill="none" stroke="#1f5fa8" stroke-width="2"/><path d="M1.4 4.2 L7.6 6.4 L3.2 10.4Z" fill="#1f5fa8"/>
<path d="M11 21.2 Q18.6 22.2 21 16.4" fill="none" stroke="#1f5fa8" stroke-width="2"/><path d="M23.8 19.4 L17.6 17.2 L22 13.2Z" fill="#1f5fa8"/><g transform="translate(17.2 7.6)"><g><circle cx="0" cy="0" r="6.3" fill="#f6c648" stroke="#c58c24" stroke-width="1.3" stroke-dasharray="2.6 2.35"/>
<circle cx="0" cy="0" r="5.3" fill="#f6c648" stroke="#cf982c" stroke-width="1"/><circle cx="0" cy="0" r="1.8" fill="#f2b43a" stroke="#d9a02e" stroke-width="0.9"/></g></g><g transform="translate(7.4 15.2)"><g><circle cx="0" cy="0" r="6.3" fill="#f6c648" stroke="#c58c24" stroke-width="1.3" stroke-dasharray="2.6 2.35"/>
<circle cx="0" cy="0" r="5.3" fill="#f6c648" stroke="#cf982c" stroke-width="1"/><circle cx="0" cy="0" r="1.8" fill="#f2b43a" stroke="#d9a02e" stroke-width="0.9"/></g></g></svg>
<svg style="left:117.5px;top:559.6px" width="24" height="22" viewBox="0 0 24 22" ><path d="M0.8 11.2 L11 16.2 L0.8 21Z" fill="#5ab56c" stroke="#3f9554" stroke-width="0.8"/><g transform="translate(15.3 7.6)"><g><circle cx="0" cy="0" r="6.4" fill="#f0bd48" stroke="#74481a" stroke-width="1.3" stroke-dasharray="2.6 2.43"/>
<circle cx="0" cy="0" r="5.2" fill="#f0bd48" stroke="#74481a" stroke-width="1.1"/><circle cx="0" cy="0" r="2.1" fill="#fbe6a4" stroke="#74481a" stroke-width="1.2"/></g></g></svg>
<svg style="left:66.6px;top:601.88px" width="16" height="9" viewBox="0 0 16 9" ><path d="M0.4 0.6h14.6l-7.3 7.6z" fill="#555"/></svg>
<svg style="left:89px;top:593.38px" width="25" height="23" viewBox="0 0 25 23" ><path d="M13.6 2.2 Q6.2 1.2 4 7.4" fill="none" stroke="#1f5fa8" stroke-width="2"/><path d="M1.4 4.2 L7.6 6.4 L3.2 10.4Z" fill="#1f5fa8"/>
<path d="M11 21.2 Q18.6 22.2 21 16.4" fill="none" stroke="#1f5fa8" stroke-width="2"/><path d="M23.8 19.4 L17.6 17.2 L22 13.2Z" fill="#1f5fa8"/><g transform="translate(17.2 7.6)"><g><circle cx="0" cy="0" r="6.3" fill="#f6c648" stroke="#c58c24" stroke-width="1.3" stroke-dasharray="2.6 2.35"/>
<circle cx="0" cy="0" r="5.3" fill="#f6c648" stroke="#cf982c" stroke-width="1"/><circle cx="0" cy="0" r="1.8" fill="#f2b43a" stroke="#d9a02e" stroke-width="0.9"/></g></g><g transform="translate(7.4 15.2)"><g><circle cx="0" cy="0" r="6.3" fill="#f6c648" stroke="#c58c24" stroke-width="1.3" stroke-dasharray="2.6 2.35"/>
<circle cx="0" cy="0" r="5.3" fill="#f6c648" stroke="#cf982c" stroke-width="1"/><circle cx="0" cy="0" r="1.8" fill="#f2b43a" stroke="#d9a02e" stroke-width="0.9"/></g></g></svg>
<svg style="left:117.5px;top:630.9599999999999px" width="24" height="22" viewBox="0 0 24 22" ><path d="M0.8 11.2 L11 16.2 L0.8 21Z" fill="#5ab56c" stroke="#3f9554" stroke-width="0.8"/><g transform="translate(15.3 7.6)"><g><circle cx="0" cy="0" r="6.4" fill="#f0bd48" stroke="#74481a" stroke-width="1.3" stroke-dasharray="2.6 2.43"/>
<circle cx="0" cy="0" r="5.2" fill="#f0bd48" stroke="#74481a" stroke-width="1.1"/><circle cx="0" cy="0" r="2.1" fill="#fbe6a4" stroke="#74481a" stroke-width="1.2"/></g></g></svg>
<svg style="left:117.5px;top:666.64px" width="24" height="22" viewBox="0 0 24 22" ><path d="M0.8 11.2 L11 16.2 L0.8 21Z" fill="#5ab56c" stroke="#3f9554" stroke-width="0.8"/><g transform="translate(15.3 7.6)"><g><circle cx="0" cy="0" r="6.4" fill="#f0bd48" stroke="#74481a" stroke-width="1.3" stroke-dasharray="2.6 2.43"/>
<circle cx="0" cy="0" r="5.2" fill="#f0bd48" stroke="#74481a" stroke-width="1.1"/><circle cx="0" cy="0" r="2.1" fill="#fbe6a4" stroke="#74481a" stroke-width="1.2"/></g></g></svg>
<svg style="left:117.5px;top:702.3199999999999px" width="24" height="22" viewBox="0 0 24 22" ><path d="M0.8 11.2 L11 16.2 L0.8 21Z" fill="#5ab56c" stroke="#3f9554" stroke-width="0.8"/><g transform="translate(15.3 7.6)"><g><circle cx="0" cy="0" r="6.4" fill="#f0bd48" stroke="#74481a" stroke-width="1.3" stroke-dasharray="2.6 2.43"/>
<circle cx="0" cy="0" r="5.2" fill="#f0bd48" stroke="#74481a" stroke-width="1.1"/><circle cx="0" cy="0" r="2.1" fill="#fbe6a4" stroke="#74481a" stroke-width="1.2"/></g></g></svg>
<span class="t" style="left:118.00px;top:-12.97px;color:#1c1c1c;transform:scaleX(1.0851);">271</span><span class="t" style="left:160.28px;top:-12.97px;color:#1c1c1c;transform:scaleX(1.1187);">udevd</span><span class="t" style="left:145.90px;top:22.71px;color:#1c1c1c;transform:scaleX(1.0820);">271</span><span class="t" style="left:187.92px;top:22.71px;color:#1c1c1c;transform:scaleX(1.0815);">(Running)</span><span class="t" style="left:116.88px;top:58.39px;color:#1c1c1c;transform:scaleX(1.1203);">747</span><span class="t" style="left:160.29px;top:58.39px;color:#1c1c1c;transform:scaleX(1.1092);">udhcpc</span><span class="t" style="left:144.78px;top:94.07px;color:#1c1c1c;transform:scaleX(1.1171);">747</span><span class="t" style="left:187.92px;top:94.07px;color:#1c1c1c;transform:scaleX(1.0815);">(Running)</span><span class="t" style="left:116.88px;top:129.75px;color:#1c1c1c;transform:scaleX(1.1203);">751</span><span class="t" style="left:160.26px;top:129.75px;color:#1c1c1c;transform:scaleX(1.1353);">haveged</span><span class="t" style="left:144.78px;top:165.43px;color:#1c1c1c;transform:scaleX(1.1171);">751</span><span class="t" style="left:187.92px;top:165.43px;color:#1c1c1c;transform:scaleX(1.0815);">(Running)</span><span class="t" style="left:116.91px;top:201.11px;color:#1c1c1c;transform:scaleX(1.0851);">758</span><span class="t" style="left:161.40px;top:201.11px;color:#1c1c1c;transform:scaleX(1.1228);">dropbear</span><span class="t" style="left:144.82px;top:236.79px;color:#ffffff;transform:scaleX(1.0820);">758</span><span class="t" style="left:187.87px;top:236.79px;color:#ffffff;transform:scaleX(1.1349);">(Suspended)</span><span class="t" style="left:173.80px;top:272.47px;color:#1c1c1c;transform:scaleX(1.1224);">0x0000aaaabace5aa0</span><span class="t" style="left:399.07px;top:272.47px;color:#1c1c1c;transform:scaleX(1.1262);">[dropbear</span><span class="t" style="left:173.80px;top:308.15px;color:#1c1c1c;transform:scaleX(1.1224);">0x0000aaaabace5aa0</span><span class="t" style="left:399.07px;top:308.15px;color:#1c1c1c;transform:scaleX(1.1262);">[dropbear</span><span class="t" style="left:173.80px;top:343.83px;color:#1c1c1c;transform:scaleX(1.1232);">0x0000000000000000</span><span class="t" style="left:116.91px;top:379.51px;color:#1c1c1c;transform:scaleX(1.0851);">765</span><span class="t" style="left:160.23px;top:379.51px;color:#1c1c1c;transform:scaleX(1.1727);">inetd</span><span class="t" style="left:144.82px;top:415.19px;color:#1c1c1c;transform:scaleX(1.0820);">765</span><span class="t" style="left:187.92px;top:415.19px;color:#1c1c1c;transform:scaleX(1.0815);">(Running)</span><span class="t" style="left:116.88px;top:450.87px;color:#1c1c1c;transform:scaleX(1.1203);">769</span><span class="t" style="left:161.40px;top:450.87px;color:#1c1c1c;transform:scaleX(1.1078);">syslogd</span><span class="t" style="left:144.78px;top:486.55px;color:#1c1c1c;transform:scaleX(1.1171);">769</span><span class="t" style="left:187.92px;top:486.55px;color:#1c1c1c;transform:scaleX(1.0815);">(Running)</span><span class="t" style="left:116.88px;top:522.23px;color:#1c1c1c;transform:scaleX(1.1203);">772</span><span class="t" style="left:160.26px;top:522.23px;color:#1c1c1c;transform:scaleX(1.1392);">klogd</span><span class="t" style="left:144.78px;top:557.91px;color:#1c1c1c;transform:scaleX(1.1171);">772</span><span class="t" style="left:187.92px;top:557.91px;color:#1c1c1c;transform:scaleX(1.0815);">(Running)</span><span class="t" style="left:116.91px;top:593.59px;color:#1c1c1c;transform:scaleX(1.0851);">783</span><span class="t" style="left:161.40px;top:593.59px;color:#1c1c1c;transform:scaleX(1.1198);">tcf-agent</span><span class="t" style="left:144.82px;top:629.27px;color:#1c1c1c;transform:scaleX(1.0820);">783</span><span class="t" style="left:187.92px;top:629.27px;color:#1c1c1c;transform:scaleX(1.0815);">(Running)</span><span class="t" style="left:144.82px;top:664.95px;color:#1c1c1c;transform:scaleX(1.0820);">784</span><span class="t" style="left:187.92px;top:664.95px;color:#1c1c1c;transform:scaleX(1.0815);">(Running)</span><span class="t" style="left:144.82px;top:700.63px;color:#1c1c1c;transform:scaleX(1.0820);">785</span><span class="t" style="left:187.92px;top:700.63px;color:#1c1c1c;transform:scaleX(1.0815);">(Running)</span>
</div>
<div id="bl" class="panel"></div>
<svg style="left:130px;top:924px" width="172" height="7" viewBox="0 0 172 7" ><path d="M2 7.5 Q4.5 1.2 12 1 H160 Q166.5 1.2 169.5 7.5" fill="#fff" stroke="#3197db" stroke-width="2"/></svg>
<!-- Editor -->
<div id="ed" class="panel"><div class="hdr"></div><div class="tab"></div></div>
<span class="t" style="left:541.60px;top:110.81px;color:#202020;transform:scaleX(1.1087);">svr-main.c</span>
<svg style="left:512.6px;top:114px" width="20" height="20" viewBox="0 0 20 20" ><defs><linearGradient id="gfi" x1="0" y1="0" x2="1" y2="1"><stop offset="0" stop-color="#fff"/><stop offset="1" stop-color="#f3f0e2"/></linearGradient></defs>
<rect x="0.8" y="0.8" width="17.4" height="17.6" fill="url(#gfi)" stroke="#8d8378" stroke-width="1.4"/><rect x="0.6" y="0.6" width="17.8" height="3.8" fill="#6da5e2" stroke="#4c8ad2" stroke-width="1"/></svg>
<svg style="left:653.4px;top:115.7px" width="17" height="17" viewBox="0 0 17 17" ><path d="M1 2.2 Q1 1 2.2 1 H4.6 Q5.6 1 6.2 1.9 L8.3 4.6 L10.4 1.9 Q11 1 12 1 H14.4 Q15.6 1 15.6 2.2 V4.6 Q15.6 5.6 14.7 6.2 L12 8.3 L14.7 10.4 Q15.6 11 15.6 12 V14.4 Q15.6 15.6 14.4 15.6 H12 Q11 15.6 10.4 14.7 L8.3 12 L6.2 14.7 Q5.6 15.6 4.6 15.6 H2.2 Q1 15.6 1 14.4 V12 Q1 11 1.9 10.4 L4.6 8.3 L1.9 6.2 Q1 5.6 1 4.6Z" fill="#fff" stroke="#1d1d1d" stroke-width="1.6" stroke-linejoin="round"/></svg>
<svg style="left:1370.3px;top:113.6px" width="17" height="8" viewBox="0 0 17 8" ><rect x="0.9" y="0.9" width="14.6" height="5.4" fill="#fff" stroke="#6a6a6a" stroke-width="1.6"/></svg>
<svg style="left:1412.3px;top:114px" width="17" height="17" viewBox="0 0 17 17" ><rect x="0.9" y="0.9" width="14.4" height="14.4" fill="#fff" stroke="#6a6a6a" stroke-width="1.6"/><path d="M0.9 4.3h14.4" stroke="#6a6a6a" stroke-width="1.3"/></svg>
<div id="edclip" style="left:504px;top:150px;width:953px;height:628px;overflow:hidden">
<div style="left:-504px;top:-150px;width:1461px;height:930px">
<div id="ann"></div><div id="lnsep"></div><div id="ovr"></div><div id="ovm"></div>
<div id="curline"></div><div id="ipline"></div>
<div class="ln" style="top:144.40px">189</div><div class="ln" style="top:170.79px">190</div><div class="ln" style="top:197.18px">191</div><div class="ln" style="top:223.57px">192</div><div class="ln" style="top:249.96px">193</div><div class="ln" style="top:276.35px">194</div><div class="ln" style="top:302.74px">195</div><div class="ln" style="top:329.13px">196</div><div class="ln" style="top:355.52px">197</div><div class="ln" style="top:381.91px">198</div><div class="ln" style="top:408.30px">199</div><div class="ln" style="top:434.69px">200</div><div class="ln" style="top:461.08px">201</div><div class="ln" style="top:487.47px">202</div><div class="ln" style="top:513.86px">203</div><div class="ln" style="top:540.25px">204</div><div class="ln" style="top:566.64px">205</div><div class="ln" style="top:593.03px">206</div><div class="ln" style="top:619.42px">207</div><div class="ln" style="top:645.81px">208</div><div class="ln" style="top:672.20px">209</div><div class="ln" style="top:698.59px">210</div><div class="ln" style="top:724.98px">211</div><div class="ln" style="top:751.37px">212</div>
<div class="cl" style="top:170.79px">        <i class="c">/* pre-authentication clients */</i></div><div class="cl" style="top:197.18px">        <b>for</b> (i = 0; i &lt; MAX_UNAUTH_CLIENTS; i++) {</div><div class="cl" style="top:223.57px">            <b>if</b> (childpipes[i] &gt;= 0) {</div><div class="cl" style="top:249.96px">                FD_SET(childpipes[i], &amp;fds);</div><div class="cl" style="top:276.35px">                maxsock = MAX(maxsock, childpipes[i]);</div><div class="cl" style="top:302.74px">            }</div><div class="cl" style="top:329.13px">        }</div><div class="cl" style="top:381.91px">        val = select(maxsock+1, &amp;fds, NULL, NULL, NULL);</div><div class="cl" style="top:434.69px">        <b>if</b> (ses.exitflag) {</div><div class="cl" style="top:461.08px">            unlink(svr_opts.pidfile);</div><div class="cl" style="top:487.47px">            dropbear_exit(<i class="s">&quot;Terminated by signal&quot;</i>);</div><div class="cl" style="top:513.86px">        }</div><div class="cl" style="top:566.64px">        <b>if</b> (val == 0) {</div><div class="cl" style="top:593.03px">            <i class="c">/* timeout reached - shouldn&#x27;t happen. eh */</i></div><div class="cl" style="top:619.42px">            <b>continue</b>;</div><div class="cl" style="top:645.81px">        }</div><div class="cl" style="top:698.59px">        <b>if</b> (val &lt; 0) {</div><div class="cl" style="top:724.98px">            <b>if</b> (errno == EINTR) {</div><div class="cl" style="top:751.37px">                <b>continue</b>;</div>
<svg style="left:506.5px;top:437px" width="12" height="15" viewBox="0 0 12 15" ><path d="M1 4.6 H5 V1 L11 7.4 L5 13.8 V10.2 H1Z" fill="#4b8bd6" stroke="#2a5fa5" stroke-width="1.1" stroke-linejoin="round"/></svg>
</div></div>
<!-- Console -->
<div id="con" class="panel"><div class="hdr"></div><div class="tab"></div></div>
<span class="t" style="left:540.31px;top:802.81px;color:#202020;transform:scaleX(1.0931);">Console</span><span class="t" style="left:695.60px;top:802.81px;color:#4a4a4a;transform:scaleX(1.1476);">Vitis S...</span><span class="t" style="left:821.28px;top:802.81px;color:#4a4a4a;transform:scaleX(1.1208);">Execu...</span><span class="t" style="left:944.83px;top:802.81px;color:#4a4a4a;transform:scaleX(1.1691);">Debu...</span><span class="t" style="left:1072.40px;top:802.81px;color:#4a4a4a;transform:scaleX(1.1430);">Vitis L...</span><span class="t" style="left:1198.49px;top:802.81px;color:#4a4a4a;transform:scaleX(1.1136);">Probl...</span><span class="t" style="left:1322.24px;top:802.81px;color:#4a4a4a;transform:scaleX(1.1625);">Debu...</span>
<div id="contb"></div><div id="conline"></div>
<span class="t" style="left:507.40px;top:893.21px;color:#404040;transform:scaleX(0.8395);">TCF</span><span class="t" style="left:545.85px;top:893.21px;color:#404040;transform:scaleX(1.1461);">Debug</span><span class="t" style="left:618.00px;top:893.21px;color:#404040;transform:scaleX(1.1490);">Virtual</span><span class="t" style="left:688.00px;top:893.21px;color:#404040;transform:scaleX(1.1128);">Terminal</span><span class="t" style="left:777.80px;top:893.21px;color:#404040;transform:scaleX(0.8667);">-</span><span class="t" style="left:790.49px;top:893.21px;color:#404040;transform:scaleX(1.1140);">Cortex-A53</span><span class="t" style="left:910.00px;top:893.21px;color:#404040;transform:scaleX(1.2056);">#3</span>
<svg style="left:512.6px;top:804.6px" width="21" height="21" viewBox="0 0 21 21" ><rect x="1" y="1" width="18.6" height="14.2" rx="2.2" fill="#e9eef8" stroke="#3c5f9f" stroke-width="2.4"/>
<path d="M4.5 5.6h8.5M4.5 9h11" stroke="#3c5f9f" stroke-width="1.7"/><path d="M8 15.5h4.6l1 2.5h-6.6z" fill="#3c5f9f"/><rect x="2.5" y="17.8" width="15.6" height="2.2" fill="#3c78c8"/></svg>
<svg style="left:629.8px;top:807.3px" width="17" height="17" viewBox="0 0 17 17" ><path d="M1 2.2 Q1 1 2.2 1 H4.6 Q5.6 1 6.2 1.9 L8.3 4.6 L10.4 1.9 Q11 1 12 1 H14.4 Q15.6 1 15.6 2.2 V4.6 Q15.6 5.6 14.7 6.2 L12 8.3 L14.7 10.4 Q15.6 11 15.6 12 V14.4 Q15.6 15.6 14.4 15.6 H12 Q11 15.6 10.4 14.7 L8.3 12 L6.2 14.7 Q5.6 15.6 4.6 15.6 H2.2 Q1 15.6 1 14.4 V12 Q1 11 1.9 10.4 L4.6 8.3 L1.9 6.2 Q1 5.6 1 4.6Z" fill="#fff" stroke="#1d1d1d" stroke-width="1.6" stroke-linejoin="round"/></svg>
<svg style="left:667.6px;top:804.6px" width="21" height="21" viewBox="0 0 21 21" ><rect x="1" y="1" width="18.6" height="14.2" rx="2.2" fill="#e9eef8" stroke="#3c5f9f" stroke-width="2.4"/>
<path d="M4.5 5.6h8.5M4.5 9h11" stroke="#3c5f9f" stroke-width="1.7"/><path d="M8 15.5h4.6l1 2.5h-6.6z" fill="#3c5f9f"/><rect x="2.5" y="17.8" width="15.6" height="2.2" fill="#3c78c8"/></svg>
<svg style="left:791px;top:804px" width="24" height="24" viewBox="0 0 24 24" ><defs><radialGradient id="gex" cx=".4" cy=".3" r=".8"><stop offset="0" stop-color="#a9b9e2"/><stop offset="1" stop-color="#5f78b8"/></radialGradient></defs>
<circle cx="11.8" cy="11.6" r="10.6" fill="url(#gex)" stroke="#7b8fc6" stroke-width="1"/><path d="M8.4 5.4 L18 11.6 L8.4 17.8Z" fill="#fff"/></svg>
<svg style="left:918px;top:803px" width="20" height="26" viewBox="0 0 20 26" ><path d="M1.5 3.5 H17 V18 L12.5 23.5 H1.5Z" fill="#fbf8e6" stroke="#8e8b5e" stroke-width="1.4"/><path d="M17 18 L12.5 23.5 V18Z" fill="#5aa64a"/>
<path d="M3 1v4M5.6 1v4M8.2 1v4M10.8 1v4M13.4 1v4M16 1v4" stroke="#55553a" stroke-width="1.1"/>
<path d="M10.8 8 V16.5 Q10.6 19.6 6 18.5" fill="none" stroke="#2f62b0" stroke-width="2.6"/></svg>
<svg style="left:1042px;top:802px" width="25" height="27" viewBox="0 0 25 27" ><path d="M1.5 1.5 H17.5 L22.5 6.5 V25 H1.5Z" fill="#fff" stroke="#27569e" stroke-width="1.8" stroke-linejoin="round"/>
<g stroke-width="1.7"><path d="M4.5 6h4M4.5 12.4h4M4.5 18.8h4" stroke="#e03030"/><path d="M4.5 9.2h4M4.5 15.6h4M4.5 22h4" stroke="#3a78c8"/>
<path d="M10.5 6h8M10.5 9.2h9M10.5 12.4h9M10.5 15.6h9M10.5 18.8h9M10.5 22h9" stroke="#9aa6ba" stroke-dasharray="2.5 1"/></g></svg>
<svg style="left:1166.6px;top:802.6px" width="24" height="25" viewBox="0 0 24 25" ><rect x="1.2" y="1.2" width="14" height="22.2" fill="#f4f0e6" stroke="#8e8e8e" stroke-width="1.4"/><path d="M1.2 12.3h14" stroke="#8e8e8e" stroke-width="1.2"/>
<path d="M15.2 1.2 H21 Q23 7 21 12 Q19.6 18 22.6 23.4 H15.2" fill="#f2f4fa" stroke="#a0a8ba" stroke-width="1.3"/>
<circle cx="8.2" cy="6.8" r="3.9" fill="#e8283a"/><path d="M4 23 V20 Q4 15 8.2 15 Q12.4 15 12.4 20 V23Z" fill="#f2a93c"/></svg>
<svg style="left:1294px;top:804px" width="24" height="25" viewBox="0 0 24 25" ><rect x="1.2" y="1.2" width="19" height="14.6" rx="2.2" fill="#dfe7f5" stroke="#34589a" stroke-width="2.6"/>
<path d="M4.8 5.5h5M4.8 9h9.5M12 3.5v7" stroke="#34589a" stroke-width="1.8"/><rect x="3" y="17" width="10" height="2.2" fill="#3c78c8"/>
<g transform="rotate(-35 16 17)"><ellipse cx="16" cy="17" rx="4" ry="5.6" fill="#8fc79c" stroke="#2a6a4a" stroke-width="1.6"/></g>
<path d="M10 13l3 2M9.6 19h3.2M11.5 23l2.3-2M20.5 11.5l-1.2 2.4M22.8 16.8h-2.4" stroke="#2a6a4a" stroke-width="1.3"/></svg>
<svg style="left:1443.6px;top:805.6px" width="17" height="8" viewBox="0 0 17 8" ><rect x="0.9" y="0.9" width="14.6" height="5.4" fill="#fff" stroke="#6a6a6a" stroke-width="1.6"/></svg>
<svg style="left:1343px;top:855px" width="25" height="24" viewBox="0 0 25 24" ><rect x="1.4" y="8" width="18.6" height="13.6" fill="#f8fafd" stroke="#9aa2b4" stroke-width="1.3"/><rect x="1.4" y="8" width="18.6" height="3.2" fill="#6aa0e0"/>
<path d="M15 11.5 L10.5 15.5 L16 20" fill="none" stroke="#d4d8e2" stroke-width="1.2"/>
<path d="M12 13.6 L20.4 5" stroke="#1f7a2c" stroke-width="5.6" stroke-linecap="round"/><path d="M12.4 13.2 L20.2 5.2" stroke="#3eb24a" stroke-width="3.6" stroke-linecap="round"/></svg>
<svg style="left:1386px;top:855.6px" width="21" height="21" viewBox="0 0 21 21" ><rect x="1" y="1" width="18.6" height="14.2" rx="2.2" fill="#e9eef8" stroke="#3c5f9f" stroke-width="2.4"/>
<path d="M4.5 5.6h8.5M4.5 9h11" stroke="#3c5f9f" stroke-width="1.7"/><path d="M8 15.5h4.6l1 2.5h-6.6z" fill="#3c5f9f"/><rect x="2.5" y="17.8" width="15.6" height="2.2" fill="#3c78c8"/></svg>
<svg style="left:1422px;top:863.4px" width="16" height="9" viewBox="0 0 16 9" ><path d="M0.3 0.5h15l-7.5 7.6z" fill="#2a2a2a"/></svg>
<svg style="left:1453.4px;top:858px" width="10" height="20" viewBox="0 0 10 20" ><rect x="1" y="1" width="12" height="17.5" fill="#fbfaf0" stroke="#b2a66c" stroke-width="1.4"/><rect x="0.4" y="0.6" width="12" height="3.4" fill="#5a98e0"/></svg>
</div>
</body></html>
